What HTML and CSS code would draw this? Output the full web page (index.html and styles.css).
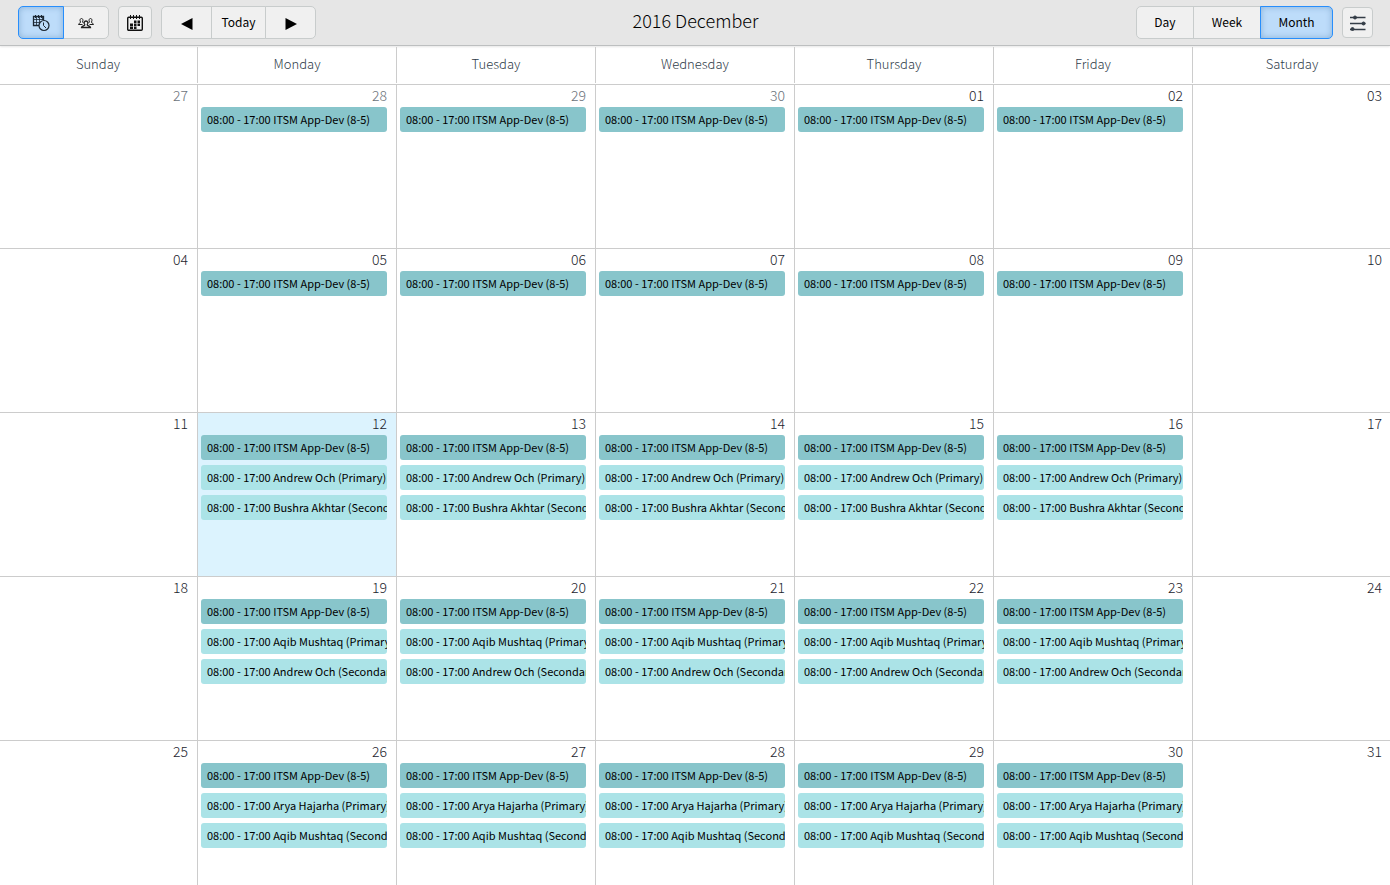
FILE: index.html
```html
<!DOCTYPE html>
<html lang="en">
<head>
	<meta charset="UTF-8">
	<meta name="viewport" content="width=device-width, initial-scale=1.0">
	<title>On-Call Calendar</title>
	<link rel="stylesheet" href="styles.css">
</head>
<body>
	<header class="toolbar">
		<div class="tools">
			<div class="btn-group">
				<button class="btn icon-btn active" type="button" aria-label="Schedule view">
					<svg width="18" height="18" viewBox="0 0 18 18" fill="none" stroke="#1c2733">
						<path d="M8 11.500H1.500V2.500H11.500V6" stroke-width="1.300"/>
						<path d="M2 5.500H11M2 8.500H8M4.500 3V11M7.500 3V11M10.500 3V6" stroke-width="0.800"/>
						<path d="M3.500 1V4M6.500 1V4M9.500 1V4"/>
						<circle cx="12" cy="11.500" r="5" fill="#bddcfa" stroke-width="1.200"/>
						<path d="M11.500 8.500V11.500L14 14"/>
					</svg>
				</button>
				<button class="btn icon-btn" type="button" aria-label="Group view">
					<svg width="18" height="18" viewBox="0 0 18 18" fill="none" stroke="#222">
						<path d="M5.500 10.500H1.500C1.500 9 3.700 9.500 3.500 8C2.600 6.500 3 4.500 4.500 4.500S6.400 6.500 5.500 8L6.500 9"/>
						<path d="M12.500 10.500H16.500C16.500 9 14.300 9.500 14.500 8C15.400 6.500 15 4.500 13.500 4.500S11.600 6.500 12.500 8L11.500 9"/>
						<path d="M4.500 13.500C4.500 11.500 8 12.300 7.800 10.700C6.500 9 7.200 7 9 7S11.500 9 10.200 10.700C10 12.300 13.500 11.500 13.500 13.500Z" stroke-width="1.300"/>
					</svg>
				</button>
			</div>
			<button class="btn date-btn" type="button" aria-label="Pick a date">
				<svg width="18" height="18" viewBox="0 0 18 18" fill="#111">
					<rect x="1.700" y="3.200" width="14.600" height="13" rx="1" fill="none" stroke="#111" stroke-width="1.400"/>
					<path d="M4 1h1v4H4zM7 1h1v4H7zM10 1h1v4h-1zM13 1h1v4h-1z"/>
					<path d="M8 6.500h2.500V9H8zM11.500 6.500H14V9h-2.500zM4 9.500h3V12H4zM8 9.500h2.500V12H8zM11.500 9.500H14V12h-2.500zM4 12.500h3V15H4zM8 12.500h2.500V15H8z"/>
				</svg>
			</button>
			<div class="btn-group">
				<button class="btn arrow-btn" type="button" aria-label="Previous month">
					<svg width="12" height="14" viewBox="0 0 12 14"><path d="M11.500 2V14L0 8Z"/></svg>
				</button>
				<button class="btn today-btn" type="button">Today</button>
				<button class="btn arrow-btn" type="button" aria-label="Next month">
					<svg width="12" height="14" viewBox="0 0 12 14"><path d="M0.500 2V14L12 8Z"/></svg>
				</button>
			</div>
		</div>
		<h1 class="title">2016 December</h1>
		<div class="tools tools-right">
			<div class="btn-group">
				<button class="btn day-btn" type="button">Day</button>
				<button class="btn week-btn" type="button">Week</button>
				<button class="btn month-btn active" type="button">Month</button>
			</div>
			<button class="btn settings-btn" type="button" aria-label="Settings">
				<svg width="16" height="16" viewBox="0 0 16 16" fill="#343d47" stroke="#343d47">
					<path d="M0 2.500H15.500M0 8.500H15.500M0 14.500H15.500" stroke-width="1.300"/>
					<circle cx="5" cy="2.500" r="1.500"/>
					<circle cx="13.500" cy="8.500" r="1.500"/>
					<circle cx="2.500" cy="14" r="1.500"/>
				</svg>
			</button>
		</div>
	</header>

	<main class="calendar">
		<table class="month">
			<thead>
				<tr>
					<th><span>Sunday</span></th>
					<th><span>Monday</span></th>
					<th><span>Tuesday</span></th>
					<th><span>Wednesday</span></th>
					<th><span>Thursday</span></th>
					<th><span>Friday</span></th>
					<th><span>Saturday</span></th>
				</tr>
			</thead>
			<tbody id="weeks"></tbody>
		</table>
	</main>

	<script src="calendar.js"></script>
</body>
</html>
```
FILE: styles.css
```css
* {
	box-sizing: border-box;
}

body {
	margin: 0;
	height: 100vh;
	display: flex;
	flex-direction: column;
	overflow: hidden;
	background-color: #fff;
	color: #000;
	font-family: "Noto Sans CJK SC", "Open Sans", sans-serif;
	font-size: 12px;
}

/* Toolbar */
.toolbar {
	display: grid;
	grid-template-columns: 1fr auto 1fr;
	align-items: center;
	flex: none;
	height: 46px;
	padding: 0 17px 0 18px;
	background-color: #e6e6e6;
	border-bottom: 1px solid #bdbfc0;
	box-shadow: 0 1px 2px rgba(0, 0, 0, 0.1);
}

.tools {
	display: flex;
	align-items: center;
	gap: 9px;
}

.tools-right {
	justify-content: flex-end;
}

.title {
	margin: 0;
	padding-bottom: 6px;
	font-size: 18px;
	font-weight: 300;
	line-height: 24px;
}

.btn-group {
	display: flex;
}

.btn {
	display: flex;
	align-items: center;
	justify-content: center;
	height: 33px;
	padding: 0 0 2px;
	background-color: #f0f0f0;
	border: 1px solid #c8cccc;
	border-radius: 4px;
	color: #000;
	font-family: inherit;
	font-size: 12px;
	line-height: 18px;
	cursor: pointer;
}

.btn-group .btn {
	border-radius: 0;
}

.btn-group .btn + .btn {
	margin-left: -1px;
}

.btn-group .btn:first-child {
	border-radius: 5px 0 0 5px;
}

.btn-group .btn:last-child {
	border-radius: 0 5px 5px 0;
}

.btn.active {
	z-index: 1;
	background-color: #bddcfa;
	border-color: #278efc;
	box-shadow: inset 0 0 6px rgba(60, 110, 160, 0.4);
}

.icon-btn {
	width: 46px;
	padding: 0;
}

.date-btn {
	width: 34px;
	padding: 0;
}

.arrow-btn {
	width: 51px;
	padding: 0;
}

.today-btn {
	width: 55px;
}

.day-btn {
	width: 58px;
}

.week-btn {
	width: 68px;
}

.month-btn {
	width: 73px;
}

.settings-btn {
	width: 31px;
	height: 31px;
	padding: 0;
}

/* Month grid, the outer edges sit just outside the window */
.calendar {
	flex: 1;
	min-height: 0;
	overflow: hidden;
}

.month {
	width: calc(100% + 3px);
	margin-left: -1px;
	table-layout: fixed;
	border-collapse: separate;
	border-spacing: 0;
}

.month th {
	height: 39px;
	padding: 1px 0;
	border-bottom: 1px solid #ccc;
	color: #2f3c4a;
	font-size: 13px;
	font-weight: 300;
	line-height: 34px;
}

.month th span {
	display: block;
	padding-bottom: 2px;
	border-right: 1px solid #ccc;
}

.month td {
	height: 164px;
	padding: 0 9px 0 3px;
	border-right: 1px solid #ccc;
	border-bottom: 1px solid #ccc;
	vertical-align: top;
}

.month td.today {
	background-color: #dcf3fe;
}

.day {
	height: 22px;
	color: #1c242d;
	font-size: 14px;
	font-weight: 300;
	line-height: 20px;
	text-align: right;
}

.other-month .day {
	color: #6c737b;
}

.event {
	height: 25px;
	margin-bottom: 5px;
	padding: 0 0 0 6px;
	overflow: hidden;
	border-radius: 3px;
	background-color: #abe3e7;
	font-size: 11px;
	line-height: 25px;
	white-space: nowrap;
}

.event.group {
	background-color: #88c5cb;
}
```
FILE: calendar.js
```js
// Shifts repeat Monday to Friday in each week
var weeks = [
	{ days: ['27', '28', '29', '30', '01', '02', '03'], shifts: [] },
	{ days: ['04', '05', '06', '07', '08', '09', '10'], shifts: [] },
	{ days: ['11', '12', '13', '14', '15', '16', '17'], shifts: ['Andrew Och (Primary)', 'Bushra Akhtar (Secondary)'] },
	{ days: ['18', '19', '20', '21', '22', '23', '24'], shifts: ['Aqib Mushtaq (Primary)', 'Andrew Och (Secondary)'] },
	{ days: ['25', '26', '27', '28', '29', '30', '31'], shifts: ['Arya Hajarha (Primary)', 'Aqib Mushtaq (Secondary)'] }
];
var hours = '08:00 - 17:00 ';
var html = '';

weeks.forEach(function(week, w) {
	html += '<tr>';
	week.days.forEach(function(day, d) {
		var cls = '';
		if (w == 0 && d < 4) cls = 'other-month';
		if (w == 2 && d == 1) cls = 'today';
		html += '<td class="' + cls + '"><div class="day">' + day + '</div>';
		if (d > 0 && d < 6) {
			html += '<div class="event group">' + hours + 'ITSM App-Dev (8-5)</div>';
			week.shifts.forEach(function(shift) {
				html += '<div class="event">' + hours + shift + '</div>';
			});
		}
		html += '</td>';
	});
	html += '</tr>';
});

document.getElementById('weeks').innerHTML = html;
```
